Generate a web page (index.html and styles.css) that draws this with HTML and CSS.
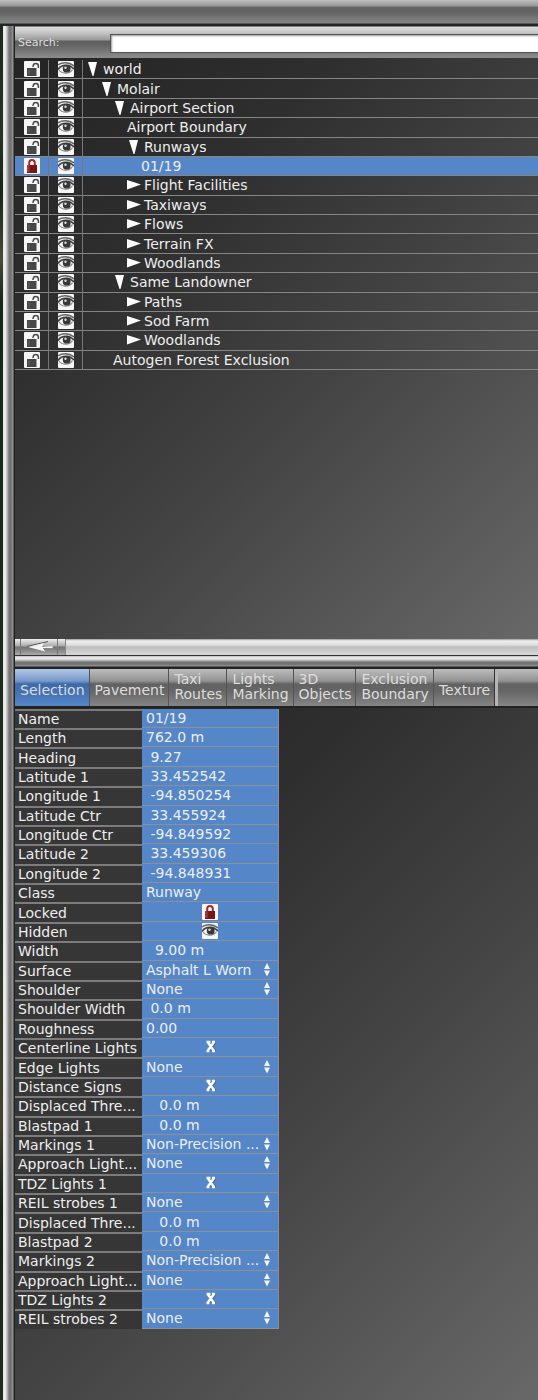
FILE: index.html
```
<!DOCTYPE html>
<html lang="en">
<head>
<meta charset="utf-8">
<meta name="viewport" content="width=device-width, initial-scale=1">
<title>Scenery editor</title>
<link rel="stylesheet" href="styles.css">
<script src="app.js" defer></script>
</head>
<body>
<svg class="defs" aria-hidden="true">
  <symbol id="unlocked" viewBox="0 0 16 16">
    <rect x="0" y="0" width="16" height="16" rx="1" fill="#f6f6f6"/>
    <path d="M9 6V5M9.200 5a2.600 2.600 0 0 1 5.200 0V7" fill="none" stroke="#4a4a4a" stroke-width="1.500"/>
    <path d="M3 7h9.500v8H3z" fill="#474747"/>
    <path d="M4.500 8.500h1v5h-1z" fill="#666"/>
  </symbol>
  <symbol id="locked" viewBox="0 0 16 16">
    <rect x="0" y="0" width="16" height="16" rx="1" fill="#f6f6f6"/>
    <path d="M5.200 8V4.800a2.800 2.800 0 0 1 5.600 0V8" fill="none" stroke="#9a2c2c" stroke-width="2"/>
    <path d="M3 7h10v8H3z" fill="#781616"/>
    <path d="M3 7h2.500v7H3z" fill="#a13a3a"/>
  </symbol>
  <symbol id="eye" viewBox="0 0 16 16">
    <rect x="0" y="0" width="16" height="16" rx="1" fill="#f6f6f6"/>
    <path d="M0 4C4 .800 11 .800 16 5" fill="none" stroke="#666" stroke-width="1.400"/>
    <path d="M0 8.500C3 3.500 11 2.500 16 8" fill="none" stroke="#444" stroke-width="1.700"/>
    <path d="M1 9C4 13 11.500 13.500 14.500 8.500" fill="none" stroke="#888" stroke-width="1.200"/>
    <circle cx="8.700" cy="7.700" r="3.900" fill="#383838"/>
    <circle cx="7.500" cy="6.800" r="1.200" fill="#ddd"/>
  </symbol>
  <symbol id="open" viewBox="0 0 16 16"><path d="M2 1h9L7.500 15h-1z" fill="#fff"/></symbol>
  <symbol id="closed" viewBox="0 0 16 16"><path d="M0 3 14 7.500 0 12.500z" fill="#fff"/></symbol>
  <symbol id="updown" viewBox="0 0 8 16"><path d="M4 1 7 7H1zM1 8.500h6L4 14.500z" fill="#f4f4f4"/></symbol>
  <symbol id="cross" viewBox="0 0 16 16">
    <path d="m6 3.500 7 9M13 3.500l-7 9" fill="none" stroke="#34588c" stroke-width="3" opacity=".5"/>
    <path d="m5.500 3 6.500 9M12 3l-6.500 9M4.500 3h4M10 3h3M4.500 12h3M10 12h3" fill="none" stroke="#fff" stroke-width="2.400"/>
  </symbol>
</svg>
<div class="titlebar"></div>
<div class="workspace">
  <div class="map-edge"></div>
  <div class="splitter"></div>
  <main class="panel">
    <form class="search">
      <label for="search">Search:</label>
      <input id="search" type="text">
    </form>
    <section class="tree-pane"><table class="tree" aria-label="Hierarchy"><tbody id="tree"></tbody></table></section>
    <div class="scrollbar">
      <button class="scroll-left" aria-label="Scroll left">
        <svg viewBox="0 0 50 16"><path d="M5.500 0v16M42.500 0v16" stroke="#777"/><path d="M12 7.500 33 2.500" fill="none" stroke="#555"/><path d="m13 8 16-4-2 4 11-1v2H28l2 3.500z" fill="#f4f4f4"/><path d="M28 9.500h10V7" fill="none" stroke="#888"/></svg>
      </button>
      <div class="scroll-thumb"></div>
    </div>
    <div class="divider"></div>
    <nav class="tabs">
      <button class="tab selected">Selection</button>
      <button class="tab">Pavement</button>
      <button class="tab two-line">Taxi<br>Routes</button>
      <button class="tab two-line">Lights<br>Marking</button>
      <button class="tab two-line">3D<br>Objects</button>
      <button class="tab two-line">Exclusion<br>Boundary</button>
      <button class="tab">Texture</button>
      <div class="tab-rest"></div>
    </nav>
    <section class="property-pane"><table class="properties" aria-label="Properties"><tbody id="properties"></tbody></table></section>
  </main>
</div>
</body>
</html>
```
FILE: styles.css
```
* { box-sizing: border-box; }
body {
  margin: 0;
  min-height: 100vh;
  display: flex;
  flex-direction: column;
  background: #222;
  color: #eee;
  font: 14px/16px "DejaVu Sans", sans-serif;
}
button, input, select {
  font: inherit;
  color: inherit;
  border: 0;
  padding: 0;
  margin: 0;
  background: none;
  border-radius: 0;
  appearance: none;
}
svg { display: block; }
.defs { position: absolute; width: 0; height: 0; }
.icon { width: 16px; height: 16px; }
.titlebar {
  height: 26px;
  background: linear-gradient(#bdbdbd 0, #999 6px, #666 7px, #636363 12px, #858585 23px, #262626 24px);
}
.workspace { flex: 1; display: flex; }
.map-edge { width: 3px; background: linear-gradient(#1b2a1b, #283426 8%, #132713 12%, #4b4a38 17%, #142916 20%, #1d2d1e 60%, #46442f 80%, #172417 86%, #222d21); }
.splitter {
  width: 12px;
  background: linear-gradient(90deg, #e2e2e2 0, #f2f2f2 2px, #bdbdbd 4px, #777 6px, #707070 8px, #999 10px, #222 11px);
}
.panel { flex: 1; min-width: 0; display: flex; flex-direction: column; }
.search {
  height: 32px;
  display: flex;
  align-items: center;
  padding: 2px 0 0 3px;
  background: linear-gradient(#222 0, #ddd 1px, #c9c9c9 6px, #999 14px, #5e5e5e 15px, #666 20px, #8a8a8a 31px);
  color: #ddd;
  font-size: 11px;
}
.search label { width: 92px; }
.search input {
  flex: 1;
  min-width: 0;
  height: 19px;
  padding: 0 4px;
  color: #222;
  background: #fff;
  border: solid #555;
  border-width: 1px 0 1px 1px;
  box-shadow: inset 1px 1px 2px #999;
}
.tree-pane, .property-pane { flex: 693 1 0; background: linear-gradient(135deg, #242424, #2e2e2e 28%, #444 58%, #686868); }
.tree-pane { flex-grow: 580; padding-top: 2px; }
table { border-collapse: separate; border-spacing: 0; table-layout: fixed; }
th, td { padding: 0; font-weight: normal; text-align: left; vertical-align: middle; white-space: nowrap; }
.tree { width: 100%; height: 310px; }
.tree td { border-bottom: 1px solid #858585; }
.tree .toggle { width: 34px; border-right: 1px solid #777; }
.toggle button { display: block; margin-left: 9px; }
.node { display: flex; align-items: center; }
.node button { width: 17px; }
.depth-0 { padding-left: 3px; }
.depth-1 { padding-left: 17px; }
.depth-2 { padding-left: 30px; }
.depth-3 { padding-left: 44px; }
.depth-4 { padding-left: 58px; }
.current { background: #5486c8; }
.scrollbar { height: 17px; display: flex; border-bottom: 1px solid #333; }
.scroll-left { width: 51px; background: linear-gradient(#eee, #aaa 7px, #707070 8px, #aaa); border-right: 1px solid #888; }
.scroll-left svg { width: 50px; height: 16px; }
.scroll-thumb { flex: 1; background: linear-gradient(#999 0, #f0f0f0 2px, #ddd 6px, #bfbfbf 8px, #d5d5d5 15px); }
.divider { height: 13px; background: linear-gradient(#bbb 0, #f4f4f4 2px, #c8c8c8 4px, #777 6px, #707070 8px, #929292 10px, #222 11px); }
.tabs { height: 39px; display: flex; border-bottom: 2px solid #222; }
.tab {
  padding: 6px 4px 0 5px;
  min-width: 0;
  text-align: left;
  line-height: 15px;
  color: #ddd;
  white-space: nowrap;
  border-right: 1px solid #555;
}
.tab.two-line { padding-top: 0; }
.tab, .tab-rest { background: linear-gradient(#bdbdbd, #929292 12px, #626262 15px, #666 22px, #858585); }
.tab.selected { color: #ddd; background: linear-gradient(#b0c6e6, #7799ca 12px, #3e69a9 15px, #4270b2 22px, #5486c8); }
.tab-rest { flex: 1; border-left: 3px solid #b5b5b5; box-shadow: -1px 0 #333; }
.property-pane { padding-top: 1px; }
.properties { width: 264px; height: 620px; }
.properties th { width: 127px; padding: 0 0 1px 3px; background: #363636; border-top: 2px solid #7c7c7c; }
.properties td { background: #5486c8; border: solid #8c9096; border-width: 0 1px 1px 0; }
.properties label { display: block; line-height: 16px; }
.properties input, .properties select { display: block; width: 100%; height: 16px; padding-left: 4px; line-height: 16px; }
.pick { display: grid; }
.pick select, .pick svg { grid-area: 1 / 1; }
.pick svg { justify-self: end; width: 8px; height: 16px; margin-right: 7px; pointer-events: none; }
option { color: #222; }
.flag { display: block; margin: 0 auto; }
```
FILE: app.js
```
const icon = (name) => `<svg class="icon" aria-hidden="true"><use href="#${name}"/></svg>`;

// [depth, label, expander state]
const nodes = [
  [0, "world", "open"],
  [1, "Molair", "open"],
  [2, "Airport Section", "open"],
  [3, "Airport Boundary"],
  [3, "Runways", "open"],
  [4, "01/19"],
  [3, "Flight Facilities", "closed"],
  [3, "Taxiways", "closed"],
  [3, "Flows", "closed"],
  [3, "Terrain FX", "closed"],
  [3, "Woodlands", "closed"],
  [2, "Same Landowner", "open"],
  [3, "Paths", "closed"],
  [3, "Sod Farm", "closed"],
  [3, "Woodlands", "closed"],
  [2, "Autogen Forest Exclusion"],
];

document.getElementById("tree").innerHTML = nodes.map(([depth, label, state]) => {
  const current = label === "01/19";
  const expander = state ? `<button aria-label="Expand or collapse ${label}">${icon(state)}</button>` : "";
  return `<tr class="${current ? "current" : ""}">
    <td class="toggle"><button aria-label="Lock ${label}">${icon(current ? "locked" : "unlocked")}</button></td>
    <td class="toggle"><button aria-label="Hide ${label}">${icon("eye")}</button></td>
    <td><div class="node depth-${depth}">${expander}<span>${label}</span></div></td></tr>`;
}).join("");

const properties = [
  ["Name", "text", "01/19"],
  ["Length", "text", "762.0 m"],
  ["Heading", "text", " 9.27"],
  ["Latitude 1", "text", " 33.452542"],
  ["Longitude 1", "text", " -94.850254"],
  ["Latitude Ctr", "text", " 33.455924"],
  ["Longitude Ctr", "text", " -94.849592"],
  ["Latitude 2", "text", " 33.459306"],
  ["Longitude 2", "text", " -94.848931"],
  ["Class", "text", "Runway"],
  ["Locked", "flag", "locked"],
  ["Hidden", "flag", "eye"],
  ["Width", "text", "  9.00 m"],
  ["Surface", "pick", "Asphalt L Worn"],
  ["Shoulder", "pick", "None"],
  ["Shoulder Width", "text", " 0.0 m"],
  ["Roughness", "text", "0.00"],
  ["Centerline Lights", "flag", "cross"],
  ["Edge Lights", "pick", "None"],
  ["Distance Signs", "flag", "cross"],
  ["Displaced Thre...", "text", "   0.0 m"],
  ["Blastpad 1", "text", "   0.0 m"],
  ["Markings 1", "pick", "Non-Precision ..."],
  ["Approach Light...", "pick", "None"],
  ["TDZ Lights 1", "flag", "cross"],
  ["REIL strobes 1", "pick", "None"],
  ["Displaced Thre...", "text", "   0.0 m"],
  ["Blastpad 2", "text", "   0.0 m"],
  ["Markings 2", "pick", "Non-Precision ..."],
  ["Approach Light...", "pick", "None"],
  ["TDZ Lights 2", "flag", "cross"],
  ["REIL strobes 2", "pick", "None"],
];

const fields = {
  text: (id, value) => `<input id="${id}" type="text" value="${value}">`,
  pick: (id, value) => `<div class="pick"><select id="${id}"><option>${value}</option></select><svg aria-hidden="true"><use href="#updown"/></svg></div>`,
  flag: (id, value) => `<button id="${id}" class="flag">${icon(value)}</button>`,
};

document.getElementById("properties").innerHTML = properties.map(([label, kind, value], i) =>
  `<tr><th scope="row"><label for="p${i}">${label}</label></th><td>${fields[kind]("p" + i, value)}</td></tr>`
).join("");
```
